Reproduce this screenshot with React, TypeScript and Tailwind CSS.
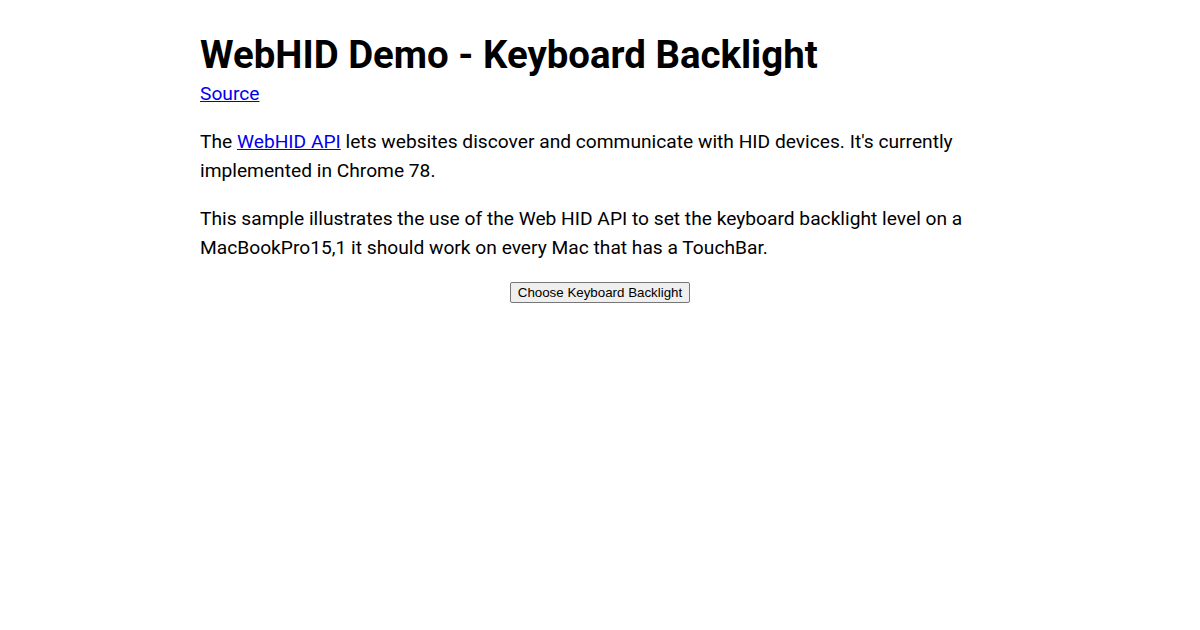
import React from "react";

export default function App() {
  return (
    <div className="min-h-screen bg-white font-['Roboto',sans-serif] text-[19.2px] leading-[28.8px] text-black">
      <div className="mx-auto max-w-[800px] pt-[32px]">
        <h1 className="text-[38.4px] font-bold leading-[46px]">
          WebHID Demo - Keyboard Backlight
        </h1>
        <a href="#" className="mt-[2px] inline-block text-[#0000ee] underline">
          Source
        </a>
        <p className="mt-[19px]">
          The{" "}
          <a href="#" className="text-[#0000ee] underline">
            WebHID API
          </a>{" "}
          lets websites discover and communicate with HID devices. It's currently
          implemented in Chrome 78.
        </p>
        <p className="mt-[20px]">
          This sample illustrates the use of the Web HID API to set the keyboard
          backlight level on a MacBookPro15,1 it should work on every Mac that has a
          TouchBar.
        </p>
        <div className="mt-[19px] flex justify-center">
          <button className="h-[21px] rounded-[2px] border border-[#767676] bg-[#efefef] px-[7px] font-['Liberation_Sans',Arial,sans-serif] text-[13.33px] leading-[15px] text-black">
            Choose Keyboard Backlight
          </button>
        </div>
      </div>
    </div>
  );
}
